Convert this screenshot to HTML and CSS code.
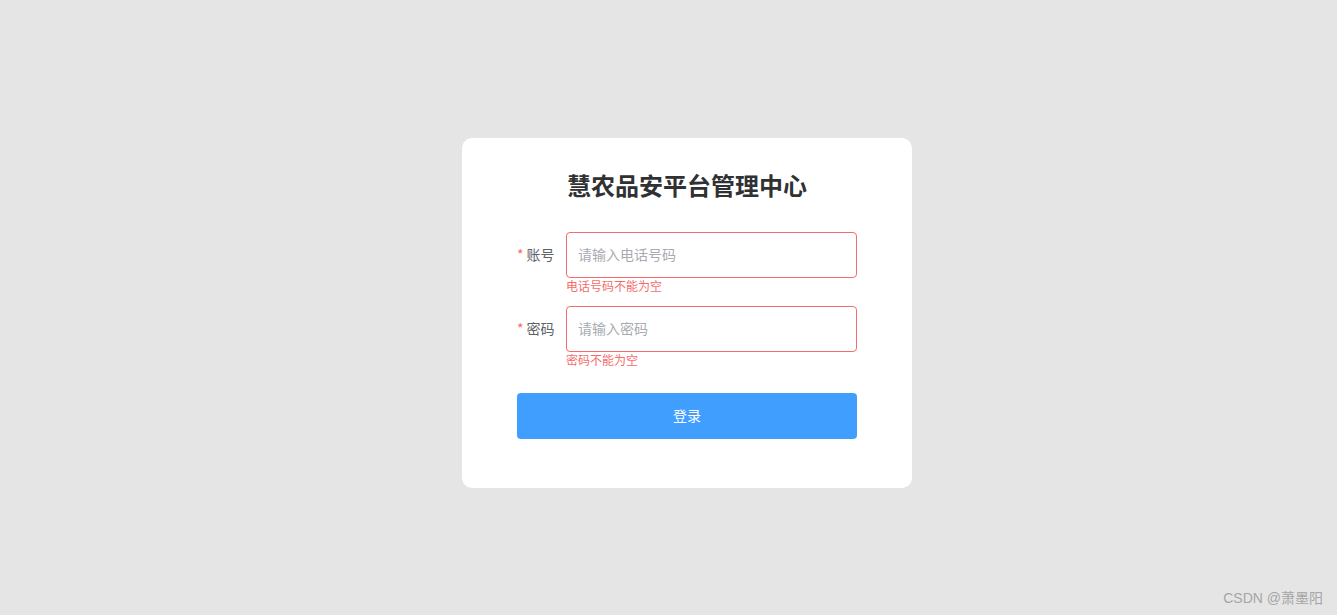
FILE: index.html
```html
<!DOCTYPE html>
<html lang="zh">
<head>
<meta charset="utf-8">
<title>慧农品安平台管理中心</title>
<link rel="stylesheet" href="styles.css">
</head>
<body>
<div class="page">
  <div class="card">
    <h1 class="title">慧农品安平台管理中心</h1>
    <form class="form">
      <div class="item">
        <label class="label"><span class="req">*</span>账号</label>
        <div class="field">
          <input class="input" type="text" placeholder="请输入电话号码">
          <div class="error">电话号码不能为空</div>
        </div>
      </div>
      <div class="item">
        <label class="label"><span class="req">*</span>密码</label>
        <div class="field">
          <input class="input" type="password" placeholder="请输入密码">
          <div class="error">密码不能为空</div>
        </div>
      </div>
      <button class="btn" type="button">登录</button>
    </form>
  </div>
</div>
<div class="watermark">CSDN @萧墨阳</div>
</body>
</html>
```
FILE: styles.css
```css
html, body {
  margin: 0;
  padding: 0;
  height: 100%;
}
body {
  background: #e5e5e5;
  font-family: "Noto Sans CJK SC", "Noto Sans", "Liberation Sans", sans-serif;
  overflow: hidden;
}
.page {
  height: 615px;
  box-sizing: border-box;
  display: flex;
  justify-content: flex-start;
  align-items: flex-start;
  padding: 138px 0 0 462px;
}
.card {
  width: 450px;
  height: 350px;
  box-sizing: border-box;
  background: #fff;
  border-radius: 10px;
  padding: 31px 55px 0 55px;
}
.title {
  margin: 0 0 31px 0;
  text-align: center;
  font-size: 24px;
  line-height: 32px;
  font-weight: 700;
  color: #303133;
}
.form {
  display: flex;
  flex-direction: column;
}
.item {
  display: flex;
  align-items: flex-start;
}
.label {
  width: 49px;
  box-sizing: border-box;
  padding-right: 12px;
  height: 46px;
  line-height: 44px;
  text-align: right;
  font-size: 14px;
  color: #606266;
  white-space: nowrap;
}
.req {
  color: #f56c6c;
  margin-right: 3px;
}
.field {
  flex: 1;
  display: flex;
  flex-direction: column;
}
.input {
  height: 46px;
  box-sizing: border-box;
  border: 1px solid #f56c6c;
  border-radius: 4px;
  padding: 0 11px 2px 11px;
  font-family: inherit;
  font-size: 14px;
  color: #606266;
  outline: none;
  background: #fff;
}
.input::placeholder {
  color: #a8abb2;
}
.error {
  height: 28px;
  font-size: 12px;
  line-height: 15px;
  color: #f56c6c;
}
.btn {
  margin-top: 13px;
  height: 46px;
  border: none;
  border-radius: 4px;
  background: #409eff;
  color: #fff;
  font-family: inherit;
  font-size: 14px;
  padding: 0 0 2px 0;
  cursor: pointer;
}
.watermark {
  position: absolute;
  right: 14px;
  bottom: 8px;
  font-size: 14px;
  color: #a6a6a6;
  font-family: "Liberation Sans", "Noto Sans CJK SC", sans-serif;
}
```
